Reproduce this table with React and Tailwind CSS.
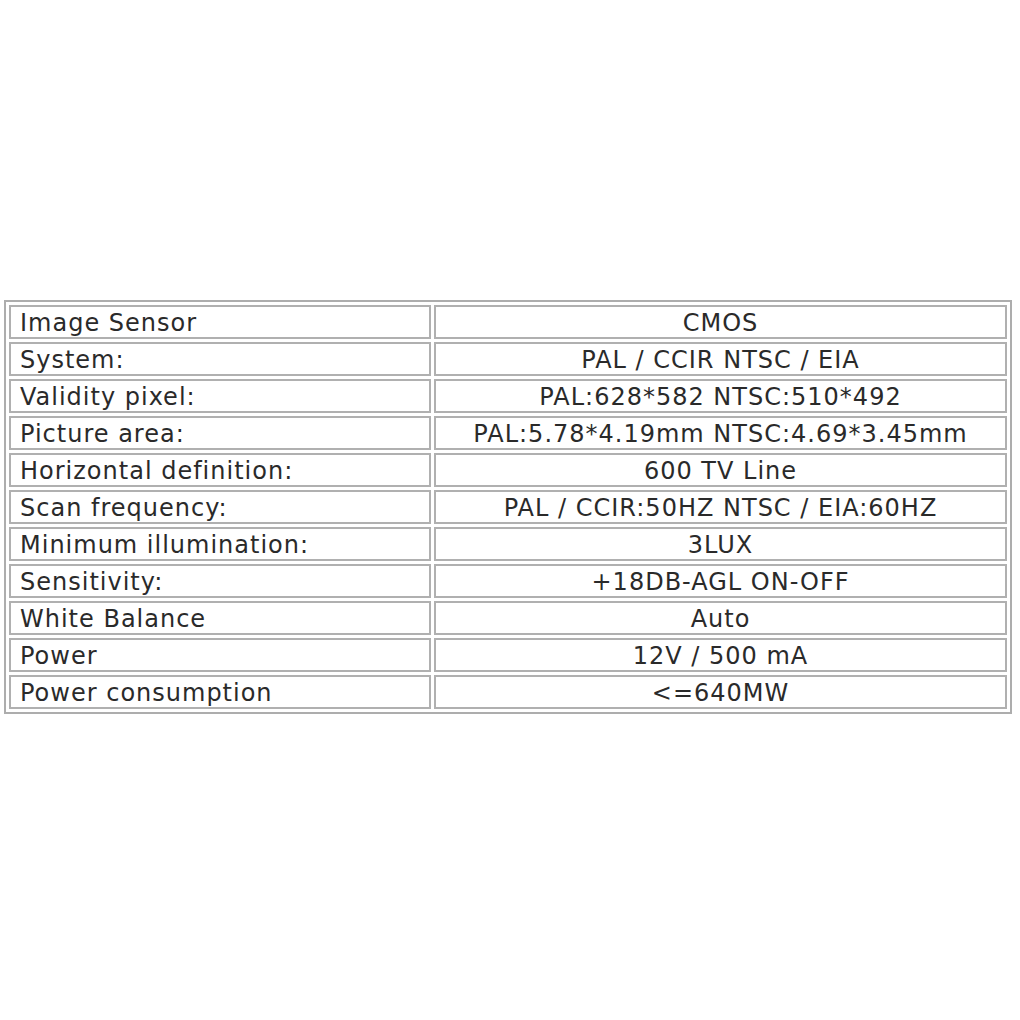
const rows = [
  ["Image Sensor", "CMOS"],
  ["System:", "PAL / CCIR NTSC / EIA"],
  ["Validity pixel:", "PAL:628*582 NTSC:510*492"],
  ["Picture area:", "PAL:5.78*4.19mm NTSC:4.69*3.45mm"],
  ["Horizontal definition:", "600 TV Line"],
  ["Scan frequency:", "PAL / CCIR:50HZ NTSC / EIA:60HZ"],
  ["Minimum illumination:", "3LUX"],
  ["Sensitivity:", "+18DB-AGL ON-OFF"],
  ["White Balance", "Auto"],
  ["Power", "12V / 500 mA"],
  ["Power consumption", "<=640MW"],
];

export default function App() {
  return (
    <div className="w-[1020px] h-[1020px] bg-white pt-[300px] pl-[4px]">
      <table
        className="w-[1008px] border-separate border-spacing-[3px] border-2 border-[#adadad] text-[#2a2a2a] text-[24px] tracking-[1px]"
        style={{ fontFamily: '"DejaVu Sans", Verdana, sans-serif' }}
      >
        <tbody>
          {rows.map(([label, value]) => (
            <tr key={label}>
              <td className="w-[422px] h-[33.8px] border-2 border-[#b0b0b0] pl-[9px] pt-[2px] pb-0 leading-[28px] whitespace-nowrap">
                {label}
              </td>
              <td className="h-[33.8px] border-2 border-[#b0b0b0] text-center pt-[2px] pb-0 leading-[28px] whitespace-nowrap">
                {value}
              </td>
            </tr>
          ))}
        </tbody>
      </table>
    </div>
  );
}
